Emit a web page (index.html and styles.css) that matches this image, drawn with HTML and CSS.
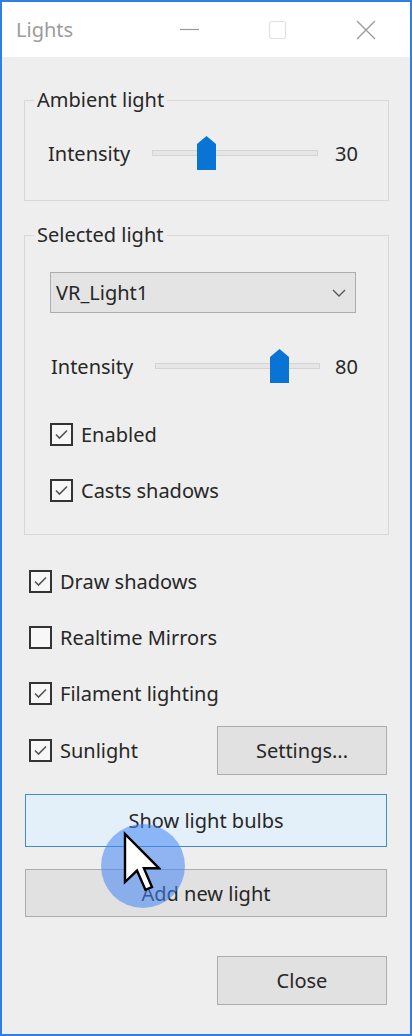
FILE: index.html
```html
<!DOCTYPE html>
<html lang="en">
<head>
<meta charset="utf-8">
<title>Lights</title>
<link rel="stylesheet" href="styles.css">
</head>
<body>
<div class="window">
  <div class="titlebar">
    <span class="title">Lights</span>
    <span class="tb-btn">
      <svg width="20" height="20" viewBox="0 0 20 20"><line x1="0" y1="9.5" x2="19" y2="9.5" stroke="#9a9a9a" stroke-width="1.2"/></svg>
    </span>
    <span class="tb-btn">
      <svg width="20" height="20" viewBox="0 0 20 20"><rect x="1.5" y="1.5" width="16" height="17" rx="1.5" fill="none" stroke="#e2e2e2" stroke-width="1.2"/></svg>
    </span>
    <span class="tb-btn">
      <svg width="20" height="20" viewBox="0 0 20 20"><path d="M1 1L19 19M19 1L1 19" stroke="#9a9a9a" stroke-width="1.3" fill="none"/></svg>
    </span>
  </div>

  <div class="client">
    <fieldset class="group">
      <legend>Ambient light</legend>
      <div class="group-body body-ambient">
        <div class="slider-row">
          <span class="label">Intensity</span>
          <div class="slider">
            <div class="track"></div>
            <svg class="thumb" style="left:45px" width="19" height="34" viewBox="0 0 19 34"><path d="M0 8L9.5 0L19 8V34H0Z" fill="#0a74d4"/></svg>
          </div>
          <span class="value">30</span>
        </div>
      </div>
    </fieldset>

    <fieldset class="group group-selected">
      <legend>Selected light</legend>
      <div class="group-body body-selected">
        <div class="combo">
          <span class="combo-text">VR_Light1</span>
          <svg class="chevron" width="14" height="8" viewBox="0 0 14 8"><path d="M1 1L7 7L13 1" fill="none" stroke="#555" stroke-width="1.3"/></svg>
        </div>
        <div class="slider-row slider-row-b">
          <span class="label">Intensity</span>
          <div class="slider">
            <div class="track"></div>
            <svg class="thumb" style="left:115px" width="19" height="34" viewBox="0 0 19 34"><path d="M0 8L9.5 0L19 8V34H0Z" fill="#0a74d4"/></svg>
          </div>
          <span class="value value-b">80</span>
        </div>
        <div class="check check-enabled">
          <span class="box"><svg width="19" height="19" viewBox="0 0 19 19"><path d="M4 9.5L7.5 13L15 5.5" fill="none" stroke="#555" stroke-width="1.6"/></svg></span>
          <span>Enabled</span>
        </div>
        <div class="check check-casts">
          <span class="box"><svg width="19" height="19" viewBox="0 0 19 19"><path d="M4 9.5L7.5 13L15 5.5" fill="none" stroke="#555" stroke-width="1.6"/></svg></span>
          <span>Casts shadows</span>
        </div>
      </div>
    </fieldset>

    <div class="check outer check-draw">
      <span class="box"><svg width="19" height="19" viewBox="0 0 19 19"><path d="M4 9.5L7.5 13L15 5.5" fill="none" stroke="#555" stroke-width="1.6"/></svg></span>
      <span>Draw shadows</span>
    </div>
    <div class="check outer check-next">
      <span class="box"></span>
      <span>Realtime Mirrors</span>
    </div>
    <div class="check outer check-next">
      <span class="box"><svg width="19" height="19" viewBox="0 0 19 19"><path d="M4 9.5L7.5 13L15 5.5" fill="none" stroke="#555" stroke-width="1.6"/></svg></span>
      <span>Filament lighting</span>
    </div>
    <div class="sun-row">
      <div class="check outer">
        <span class="box"><svg width="19" height="19" viewBox="0 0 19 19"><path d="M4 9.5L7.5 13L15 5.5" fill="none" stroke="#555" stroke-width="1.6"/></svg></span>
        <span>Sunlight</span>
      </div>
      <button class="btn btn-settings">Settings...</button>
    </div>

    <button class="btn btn-wide btn-hover btn-show">Show light bulbs</button>
    <button class="btn btn-wide btn-add">Add new light</button>
    <button class="btn btn-close">Close</button>
  </div>

  <div class="cursor-ring"></div>
  <svg class="cursor-arrow" width="39" height="63" viewBox="0 0 13 21"><path d="M1 1V17L5 13.2L7.8 19.6L10 18.7L7.3 12.4H12.3Z" fill="#fff" stroke="#000" stroke-width="0.8" stroke-linejoin="miter"/></svg>
</div>
</body>
</html>
```

FILE: styles.css
```css
body {
  margin: 0;
  background: #ffffff;
}

.window {
  position: relative;
  width: 412px;
  height: 1036px;
  box-sizing: border-box;
  border: 2px solid #2f7fe6;
  display: flex;
  flex-direction: column;
  overflow: hidden;
  font-family: "Noto Sans", "Open Sans", sans-serif;
  font-size: 20px;
  color: #272727;
}

.titlebar {
  flex: none;
  height: 55px;
  background: #ffffff;
  display: flex;
  align-items: center;
}

.title {
  flex: 1;
  padding-left: 14px;
  color: #9c9c9c;
}

.tb-btn {
  width: 88px;
  height: 55px;
  display: flex;
  align-items: center;
  justify-content: center;
}

.client {
  flex: 1;
  background: #eeeeee;
  padding: 29px 21px 0 22px;
  display: flex;
  flex-direction: column;
}

.group {
  margin: 0;
  padding: 0;
  min-width: 0;
  border: 1px solid #d8d8d8;
}

.group legend {
  margin-left: 9px;
  padding: 0 3px;
  line-height: 28px;
}

.group-selected {
  margin-top: 20px;
}

.body-ambient {
  padding: 22px 0 30px 23px;
}

.body-selected {
  padding: 23px 0 30px 25px;
}

.slider-row {
  display: grid;
  grid-template-columns: 104px 166px auto;
  align-items: center;
  height: 34px;
}

.slider-row-b {
  margin-top: 36px;
  margin-left: 1px;
  grid-template-columns: 104px 165px auto;
}

.slider {
  position: relative;
  height: 34px;
}

.track {
  margin-top: 14px;
  height: 6px;
  box-sizing: border-box;
  border: 1px solid #d4d4d4;
  background: #e6e6e6;
}

.thumb {
  position: absolute;
  top: 0;
}

.value {
  padding-left: 17px;
}

.value-b {
  padding-left: 15px;
}

.combo {
  width: 306px;
  height: 41px;
  box-sizing: border-box;
  border: 1px solid #adadad;
  background: #e4e4e4;
  display: flex;
  align-items: center;
  padding: 0 9px 0 5px;
}

.combo-text {
  flex: 1;
}

.check {
  display: flex;
  align-items: center;
  gap: 8px;
  height: 28px;
}

.box {
  width: 23px;
  height: 23px;
  box-sizing: border-box;
  border: 2px solid #333333;
  background: #f7f7f7;
  display: flex;
  align-items: center;
  justify-content: center;
  flex: none;
}

.check-enabled {
  margin-top: 37px;
}

.check-casts {
  margin-top: 28px;
}

.outer {
  margin-left: 5px;
}

.check-draw {
  margin-top: 32px;
}

.check-next {
  margin-top: 28px;
}

.sun-row {
  margin-top: 19px;
  display: flex;
  align-items: center;
  justify-content: space-between;
}

.btn {
  font-family: inherit;
  font-size: 20px;
  color: #272727;
  background: #e1e1e1;
  border: 1px solid #adadad;
  padding: 0;
  margin: 0;
}

.btn-settings {
  width: 170px;
  height: 49px;
  margin-right: 2px;
}

.btn-wide {
  margin: 0 2px 0 1px;
}

.btn-hover {
  background: #e3f0fa;
  border-color: #3f8fc4;
}

.btn-show {
  margin-top: 19px;
  height: 53px;
}

.btn-add {
  margin-top: 22px;
  height: 48px;
}

.btn-close {
  align-self: flex-end;
  width: 170px;
  height: 49px;
  margin: 39px 2px 0 0;
}

.cursor-ring {
  position: absolute;
  left: 99px;
  top: 822px;
  width: 84px;
  height: 84px;
  border-radius: 50%;
  background: rgba(66, 133, 244, 0.55);
}

.cursor-arrow {
  position: absolute;
  left: 120px;
  top: 829px;
}
```
